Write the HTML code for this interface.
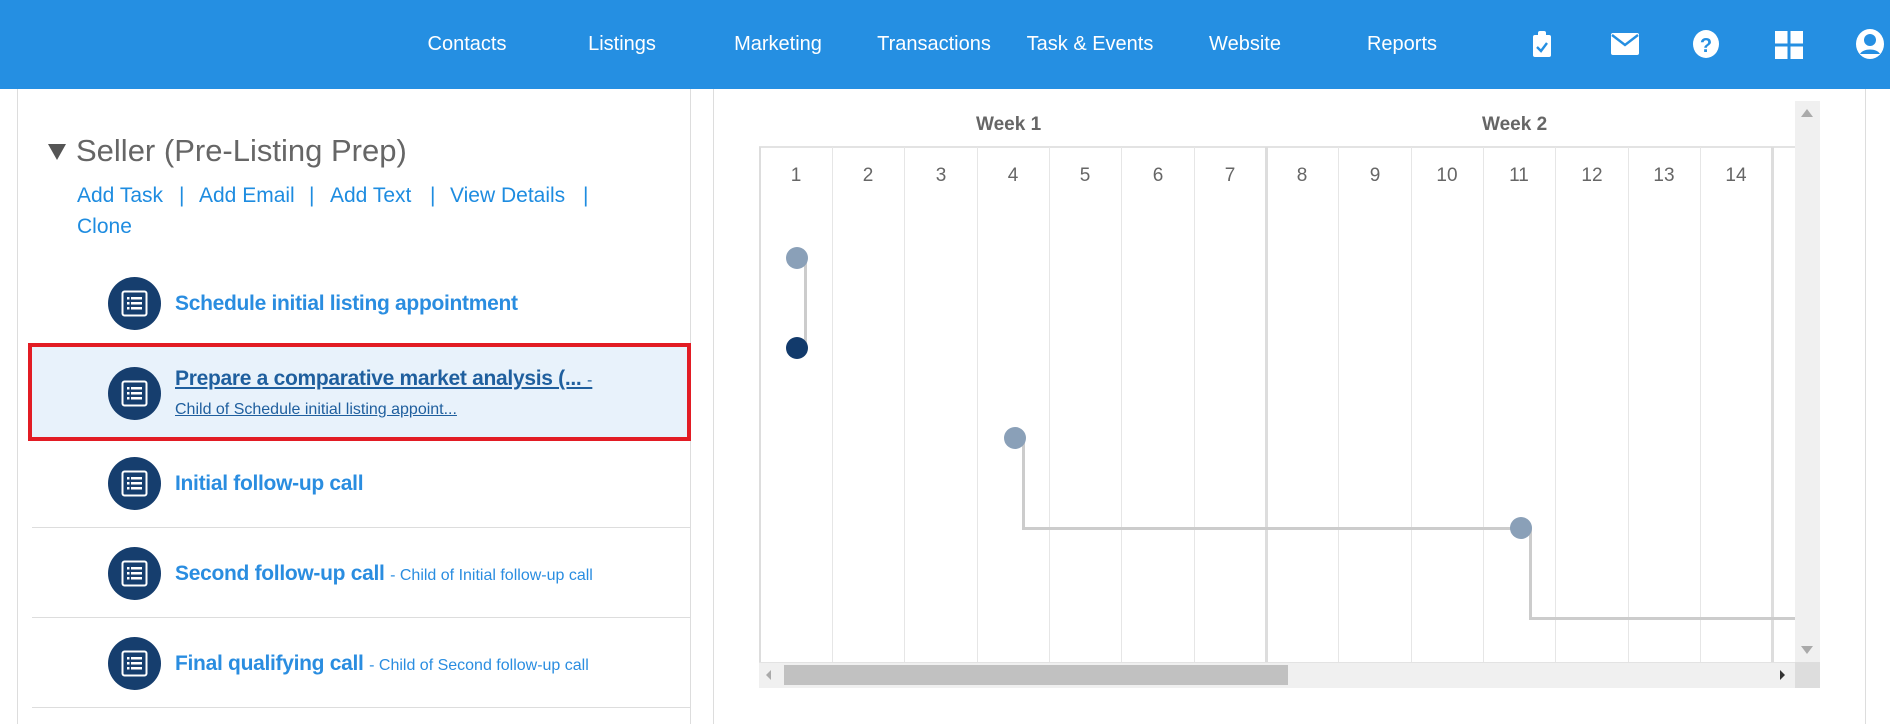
<!DOCTYPE html>
<html><head><meta charset="utf-8"><style>
*{margin:0;padding:0;box-sizing:border-box}
body{width:1890px;height:724px;overflow:hidden;background:#fff;font-family:"Liberation Sans",sans-serif;position:relative}
.a{position:absolute}
.hdr{left:0;top:0;width:1890px;height:89px;background:#258fe2}
.nav{top:33px;color:#fff;font-size:20px;transform:translateX(-50%);white-space:nowrap}
.ic{top:29px;transform:translateX(-50%)}
.title{left:76px;top:133px;font-size:31px;color:#666}
.tri{left:48px;top:144px;width:0;height:0;border-left:9px solid transparent;border-right:9px solid transparent;border-top:16px solid #555}
.lnk{color:#1e8ce0;font-size:21px;top:184px;white-space:nowrap}
.circ{width:53px;height:53px;border-radius:50%;background:#163e6e;left:108px}
.circ svg{position:absolute;left:13px;top:13px}
.tt{left:175px;color:#2a8de0;font-size:21px;font-weight:bold;letter-spacing:-0.3px;white-space:nowrap}
.ch{font-weight:normal;font-size:16px;letter-spacing:0}
.sep{left:32px;width:658px;height:1px;background:#ddd}
.vl{top:147px;width:1px;height:515px;background:#e6e6e6}
.vt{top:147px;width:3px;height:515px;background:#ddd}
.dn{top:165px;font-size:19px;color:#666;transform:translateX(-50%)}
.dot{width:22px;height:22px;border-radius:50%;background:#8aa0b8}
.ln{background:#ccc}
</style></head><body>
<div class="a hdr"></div>
<div class="a nav" style="left:467px">Contacts</div>
<div class="a nav" style="left:622px">Listings</div>
<div class="a nav" style="left:778px">Marketing</div>
<div class="a nav" style="left:934px">Transactions</div>
<div class="a nav" style="left:1090px">Task &amp; Events</div>
<div class="a nav" style="left:1245px">Website</div>
<div class="a nav" style="left:1402px">Reports</div>
<svg class="a ic" style="left:1542px" width="20" height="30" viewBox="0 0 20 30"><rect x="1" y="6" width="18" height="22" rx="2" fill="#fff"/><rect x="6" y="2" width="8" height="6" rx="2" fill="#fff"/><path d="M5 18l4 4 6-8" stroke="#258fe2" stroke-width="2.4" fill="none"/></svg>
<svg class="a ic" style="left:1625px;top:33px" width="28" height="22" viewBox="0 0 28 22"><rect x="0" y="0" width="28" height="22" rx="2" fill="#fff"/><path d="M1 2l13 10 13-10" stroke="#258fe2" stroke-width="2.4" fill="none"/></svg>
<svg class="a ic" style="left:1706px" width="28" height="30" viewBox="0 0 28 30"><ellipse cx="14" cy="15" rx="13" ry="14" fill="#fff"/><text x="14" y="23" text-anchor="middle" font-family="Liberation Sans" font-weight="bold" font-size="20" fill="#258fe2">?</text></svg>
<svg class="a ic" style="left:1789px;top:31px" width="28" height="28" viewBox="0 0 28 28"><rect x="0" y="0" width="12.5" height="12.5" fill="#fff"/><rect x="15.5" y="0" width="12.5" height="12.5" fill="#fff"/><rect x="0" y="15.5" width="12.5" height="12.5" fill="#fff"/><rect x="15.5" y="15.5" width="12.5" height="12.5" fill="#fff"/></svg>
<svg class="a ic" style="left:1870px;top:28px" width="30" height="32" viewBox="0 0 30 32"><ellipse cx="15" cy="16" rx="14" ry="15" fill="#fff"/><circle cx="15" cy="12" r="6" fill="#258fe2"/><path d="M5 26c3-6 17-6 20 0" fill="#258fe2"/></svg>

<div class="a" style="left:17px;top:89px;width:1px;height:635px;background:#ddd"></div>
<div class="a" style="left:690px;top:89px;width:1px;height:635px;background:#ddd"></div>
<div class="a" style="left:713px;top:89px;width:1px;height:635px;background:#ddd"></div>
<div class="a" style="left:1865px;top:89px;width:1px;height:635px;background:#ddd"></div>

<div class="a tri"></div>
<div class="a title">Seller (Pre-Listing Prep)</div>
<div class="a lnk" style="left:77px">Add Task</div>
<div class="a lnk" style="left:179px">|</div>
<div class="a lnk" style="left:199px">Add Email</div>
<div class="a lnk" style="left:309px">|</div>
<div class="a lnk" style="left:330px">Add Text</div>
<div class="a lnk" style="left:430px">|</div>
<div class="a lnk" style="left:450px">View Details</div>
<div class="a lnk" style="left:583px">|</div>
<div class="a lnk" style="left:77px;top:215px">Clone</div>

<div class="a" style="left:28px;top:343px;width:663px;height:98px;background:#e8f2fb;border:4px solid #e21c24"></div>

<svg width="0" height="0" style="position:absolute"><defs><g id="li"><rect x="1.5" y="1.5" width="24" height="24" rx="2" fill="none" stroke="#fff" stroke-width="2"/><rect x="6" y="7" width="2.5" height="2.5" fill="#fff"/><rect x="10" y="7" width="11" height="2.5" fill="#fff"/><rect x="6" y="12" width="2.5" height="2.5" fill="#fff"/><rect x="10" y="12" width="11" height="2.5" fill="#fff"/><rect x="6" y="17" width="2.5" height="2.5" fill="#fff"/><rect x="10" y="17" width="11" height="2.5" fill="#fff"/></g></defs></svg>
<div class="a circ" style="top:277px"><svg width="27" height="27"><use href="#li"/></svg></div>
<div class="a circ" style="top:367px"><svg width="27" height="27"><use href="#li"/></svg></div>
<div class="a circ" style="top:457px"><svg width="27" height="27"><use href="#li"/></svg></div>
<div class="a circ" style="top:547px"><svg width="27" height="27"><use href="#li"/></svg></div>
<div class="a circ" style="top:637px"><svg width="27" height="27"><use href="#li"/></svg></div>

<div class="a tt" style="top:292px">Schedule initial listing appointment</div>
<div class="a tt" style="top:367px;color:#1f5f9e;text-decoration:underline">Prepare a comparative market analysis (... <span class="ch">-</span></div>
<div class="a tt ch" style="top:401px;color:#1f5f9e;text-decoration:underline">Child of Schedule initial listing appoint...</div>
<div class="a tt" style="top:472px">Initial follow-up call</div>
<div class="a sep" style="top:527px"></div>
<div class="a tt" style="top:562px">Second follow-up call <span class="ch">- Child of Initial follow-up call</span></div>
<div class="a sep" style="top:617px"></div>
<div class="a tt" style="top:652px">Final qualifying call <span class="ch">- Child of Second follow-up call</span></div>
<div class="a sep" style="top:707px"></div>

<div class="a" style="left:1795px;top:101px;width:25px;height:587px;background:#f0f0f0"></div>
<div class="a" style="left:1801px;top:109px;border-left:6px solid transparent;border-right:6px solid transparent;border-bottom:8px solid #aaa"></div>
<div class="a" style="left:1801px;top:646px;border-left:6px solid transparent;border-right:6px solid transparent;border-top:8px solid #aaa"></div>
<div class="a" style="left:1795px;top:662px;width:25px;height:26px;background:#ddd"></div>
<div class="a" style="left:976px;top:114px;font-size:19px;font-weight:bold;color:#666">Week 1</div>
<div class="a" style="left:1482px;top:114px;font-size:19px;font-weight:bold;color:#666">Week 2</div>
<div class="a" style="left:759px;top:146px;width:1036px;height:2px;background:#e3e3e3"></div>
<div class="a" style="left:759px;top:147px;width:2px;height:515px;background:#ddd"></div>
<div class="a vl" style="left:832px"></div><div class="a vl" style="left:904px"></div><div class="a vl" style="left:977px"></div><div class="a vl" style="left:1049px"></div><div class="a vl" style="left:1121px"></div><div class="a vl" style="left:1194px"></div>
<div class="a vt" style="left:1265px"></div>
<div class="a vl" style="left:1338px"></div><div class="a vl" style="left:1411px"></div><div class="a vl" style="left:1483px"></div><div class="a vl" style="left:1555px"></div><div class="a vl" style="left:1628px"></div><div class="a vl" style="left:1700px"></div>
<div class="a vt" style="left:1771px"></div>
<div class="a dn" style="left:796px">1</div><div class="a dn" style="left:868px">2</div><div class="a dn" style="left:941px">3</div><div class="a dn" style="left:1013px">4</div><div class="a dn" style="left:1085px">5</div><div class="a dn" style="left:1158px">6</div><div class="a dn" style="left:1230px">7</div><div class="a dn" style="left:1302px">8</div><div class="a dn" style="left:1375px">9</div><div class="a dn" style="left:1447px">10</div><div class="a dn" style="left:1519px">11</div><div class="a dn" style="left:1592px">12</div><div class="a dn" style="left:1664px">13</div><div class="a dn" style="left:1736px">14</div>

<div class="a ln" style="left:804px;top:258px;width:3px;height:90px"></div>
<div class="a ln" style="left:1022px;top:438px;width:3px;height:92px"></div>
<div class="a ln" style="left:1022px;top:527px;width:500px;height:3px"></div>
<div class="a ln" style="left:1529px;top:528px;width:3px;height:91px"></div>
<div class="a ln" style="left:1529px;top:617px;width:266px;height:3px"></div>
<div class="a dot" style="left:786px;top:247px"></div>
<div class="a dot" style="left:786px;top:337px;background:#123a6b"></div>
<div class="a dot" style="left:1004px;top:427px"></div>
<div class="a dot" style="left:1510px;top:517px"></div>

<div class="a" style="left:759px;top:662px;width:1036px;height:26px;background:#f0f0f0;border-top:1px solid #e3e3e3"></div>
<div class="a" style="left:784px;top:665px;width:504px;height:20px;background:#c1c1c1"></div>
<div class="a" style="left:766px;top:670px;border-top:5px solid transparent;border-bottom:5px solid transparent;border-right:5px solid #aaa"></div>
<div class="a" style="left:1780px;top:670px;border-top:5px solid transparent;border-bottom:5px solid transparent;border-left:5px solid #333"></div>
</body></html>
